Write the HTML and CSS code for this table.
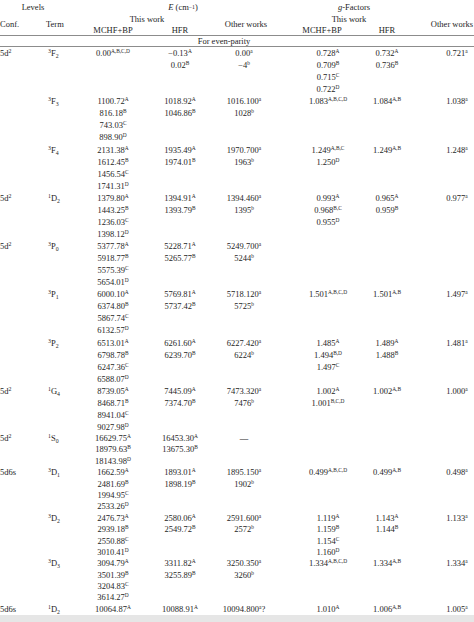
FILE: index.html
```html
<!DOCTYPE html>
<html>
<head>
<meta charset="utf-8">
<link rel="stylesheet" href="styles.css">
</head>
<body>
<div class="table">
  <div class="head">
    <div class="hc levels">Levels</div>
    <div class="hc energy"><i>E</i>&nbsp;(cm<sup>−1</sup>)</div>
    <div class="hc gfac"><i>g</i>-Factors</div>
    <div class="hc conf-h">Conf.</div>
    <div class="hc term-h">Term</div>
    <div class="hc tw-e">This work</div>
    <div class="hc ow-e">Other works</div>
    <div class="hc tw-g">This work</div>
    <div class="hc ow-g">Other works</div>
    <div class="hc m-e">MCHF+BP</div>
    <div class="hc h-e">HFR</div>
    <div class="hc m-g">MCHF+BP</div>
    <div class="hc h-g">HFR</div>
  </div>
  <div class="rule"></div>
  <div class="section">For even-parity</div>
  <div class="rule"></div>

  <div class="group">
    <div class="conf"><div class="ln">5d<sup>2</sup></div></div>
    <div class="term"><div class="ln"><sup>3</sup>F<sub>2</sub></div></div>
    <div class="col"><div class="ln">0.00<sup>A,B,C,D</sup></div></div>
    <div class="col"><div class="ln">−0.13<sup>A</sup></div><div class="ln">0.02<sup>B</sup></div></div>
    <div class="col"><div class="ln">0.00<sup>a</sup></div><div class="ln">−4<sup>b</sup></div></div>
    <div class="col gm"><div class="ln">0.728<sup>A</sup></div><div class="ln">0.709<sup>B</sup></div><div class="ln">0.715<sup>C</sup></div><div class="ln">0.722<sup>D</sup></div></div>
    <div class="col"><div class="ln">0.732<sup>A</sup></div><div class="ln">0.736<sup>B</sup></div></div>
    <div class="col go"><div class="ln">0.721<sup>a</sup></div></div>
  </div>

  <div class="group">
    <div class="conf"></div>
    <div class="term"><div class="ln"><sup>3</sup>F<sub>3</sub></div></div>
    <div class="col"><div class="ln">1100.72<sup>A</sup></div><div class="ln">816.18<sup>B</sup></div><div class="ln">743.03<sup>C</sup></div><div class="ln">898.90<sup>D</sup></div></div>
    <div class="col"><div class="ln">1018.92<sup>A</sup></div><div class="ln">1046.86<sup>B</sup></div></div>
    <div class="col"><div class="ln">1016.100<sup>a</sup></div><div class="ln">1028<sup>b</sup></div></div>
    <div class="col gm"><div class="ln">1.083<sup>A,B,C,D</sup></div></div>
    <div class="col"><div class="ln">1.084<sup>A,B</sup></div></div>
    <div class="col go"><div class="ln">1.038<sup>a</sup></div></div>
  </div>

  <div class="group">
    <div class="conf"></div>
    <div class="term"><div class="ln"><sup>3</sup>F<sub>4</sub></div></div>
    <div class="col"><div class="ln">2131.38<sup>A</sup></div><div class="ln">1612.45<sup>B</sup></div><div class="ln">1456.54<sup>C</sup></div><div class="ln">1741.31<sup>D</sup></div></div>
    <div class="col"><div class="ln">1935.49<sup>A</sup></div><div class="ln">1974.01<sup>B</sup></div></div>
    <div class="col"><div class="ln">1970.700<sup>a</sup></div><div class="ln">1963<sup>b</sup></div></div>
    <div class="col gm"><div class="ln">1.249<sup>A,B,C</sup></div><div class="ln">1.250<sup>D</sup></div></div>
    <div class="col"><div class="ln">1.249<sup>A,B</sup></div></div>
    <div class="col go"><div class="ln">1.248<sup>a</sup></div></div>
  </div>

  <div class="group">
    <div class="conf"><div class="ln">5d<sup>2</sup></div></div>
    <div class="term"><div class="ln"><sup>1</sup>D<sub>2</sub></div></div>
    <div class="col"><div class="ln">1379.80<sup>A</sup></div><div class="ln">1443.25<sup>B</sup></div><div class="ln">1236.03<sup>C</sup></div><div class="ln">1398.12<sup>D</sup></div></div>
    <div class="col"><div class="ln">1394.91<sup>A</sup></div><div class="ln">1393.79<sup>B</sup></div></div>
    <div class="col"><div class="ln">1394.460<sup>a</sup></div><div class="ln">1395<sup>b</sup></div></div>
    <div class="col gm"><div class="ln">0.993<sup>A</sup></div><div class="ln">0.968<sup>B,C</sup></div><div class="ln">0.955<sup>D</sup></div></div>
    <div class="col"><div class="ln">0.965<sup>A</sup></div><div class="ln">0.959<sup>B</sup></div></div>
    <div class="col go"><div class="ln">0.977<sup>a</sup></div></div>
  </div>

  <div class="group">
    <div class="conf"><div class="ln">5d<sup>2</sup></div></div>
    <div class="term"><div class="ln"><sup>3</sup>P<sub>0</sub></div></div>
    <div class="col"><div class="ln">5377.78<sup>A</sup></div><div class="ln">5918.77<sup>B</sup></div><div class="ln">5575.39<sup>C</sup></div><div class="ln">5654.01<sup>D</sup></div></div>
    <div class="col"><div class="ln">5228.71<sup>A</sup></div><div class="ln">5265.77<sup>B</sup></div></div>
    <div class="col"><div class="ln">5249.700<sup>a</sup></div><div class="ln">5244<sup>b</sup></div></div>
    <div class="col gm"></div>
    <div class="col"></div>
    <div class="col go"></div>
  </div>

  <div class="group">
    <div class="conf"></div>
    <div class="term"><div class="ln"><sup>3</sup>P<sub>1</sub></div></div>
    <div class="col"><div class="ln">6000.10<sup>A</sup></div><div class="ln">6374.80<sup>B</sup></div><div class="ln">5867.74<sup>C</sup></div><div class="ln">6132.57<sup>D</sup></div></div>
    <div class="col"><div class="ln">5769.81<sup>A</sup></div><div class="ln">5737.42<sup>B</sup></div></div>
    <div class="col"><div class="ln">5718.120<sup>a</sup></div><div class="ln">5725<sup>b</sup></div></div>
    <div class="col gm"><div class="ln">1.501<sup>A,B,C,D</sup></div></div>
    <div class="col"><div class="ln">1.501<sup>A,B</sup></div></div>
    <div class="col go"><div class="ln">1.497<sup>a</sup></div></div>
  </div>

  <div class="group">
    <div class="conf"></div>
    <div class="term"><div class="ln"><sup>3</sup>P<sub>2</sub></div></div>
    <div class="col"><div class="ln">6513.01<sup>A</sup></div><div class="ln">6798.78<sup>B</sup></div><div class="ln">6247.36<sup>C</sup></div><div class="ln">6588.07<sup>D</sup></div></div>
    <div class="col"><div class="ln">6261.60<sup>A</sup></div><div class="ln">6239.70<sup>B</sup></div></div>
    <div class="col"><div class="ln">6227.420<sup>a</sup></div><div class="ln">6224<sup>b</sup></div></div>
    <div class="col gm"><div class="ln">1.485<sup>A</sup></div><div class="ln">1.494<sup>B,D</sup></div><div class="ln">1.497<sup>C</sup></div></div>
    <div class="col"><div class="ln">1.489<sup>A</sup></div><div class="ln">1.488<sup>B</sup></div></div>
    <div class="col go"><div class="ln">1.481<sup>a</sup></div></div>
  </div>

  <div class="group">
    <div class="conf"><div class="ln">5d<sup>2</sup></div></div>
    <div class="term"><div class="ln"><sup>1</sup>G<sub>4</sub></div></div>
    <div class="col"><div class="ln">8739.05<sup>A</sup></div><div class="ln">8468.71<sup>B</sup></div><div class="ln">8941.04<sup>C</sup></div><div class="ln">9027.98<sup>D</sup></div></div>
    <div class="col"><div class="ln">7445.09<sup>A</sup></div><div class="ln">7374.70<sup>B</sup></div></div>
    <div class="col"><div class="ln">7473.320<sup>a</sup></div><div class="ln">7476<sup>b</sup></div></div>
    <div class="col gm"><div class="ln">1.002<sup>A</sup></div><div class="ln">1.001<sup>B,C,D</sup></div></div>
    <div class="col"><div class="ln">1.002<sup>A,B</sup></div></div>
    <div class="col go"><div class="ln">1.000<sup>a</sup></div></div>
  </div>

  <div class="group tight">
    <div class="conf"><div class="ln">5d<sup>2</sup></div></div>
    <div class="term"><div class="ln"><sup>1</sup>S<sub>0</sub></div></div>
    <div class="col"><div class="ln">16629.75<sup>A</sup></div><div class="ln">18979.63<sup>B</sup></div><div class="ln">18143.98<sup>D</sup></div></div>
    <div class="col"><div class="ln">16453.30<sup>A</sup></div><div class="ln">13675.30<sup>B</sup></div></div>
    <div class="col"><div class="ln">—</div></div>
    <div class="col gm"></div>
    <div class="col"></div>
    <div class="col go"></div>
  </div>

  <div class="group tight">
    <div class="conf"><div class="ln">5d6s</div></div>
    <div class="term"><div class="ln"><sup>3</sup>D<sub>1</sub></div></div>
    <div class="col"><div class="ln">1662.59<sup>A</sup></div><div class="ln">2481.69<sup>B</sup></div><div class="ln">1994.95<sup>C</sup></div><div class="ln">2533.26<sup>D</sup></div></div>
    <div class="col"><div class="ln">1893.01<sup>A</sup></div><div class="ln">1898.19<sup>B</sup></div></div>
    <div class="col"><div class="ln">1895.150<sup>a</sup></div><div class="ln">1902<sup>b</sup></div></div>
    <div class="col gm"><div class="ln">0.499<sup>A,B,C,D</sup></div></div>
    <div class="col"><div class="ln">0.499<sup>A,B</sup></div></div>
    <div class="col go"><div class="ln">0.498<sup>a</sup></div></div>
  </div>

  <div class="group tight">
    <div class="conf"></div>
    <div class="term"><div class="ln"><sup>3</sup>D<sub>2</sub></div></div>
    <div class="col"><div class="ln">2476.73<sup>A</sup></div><div class="ln">2939.18<sup>B</sup></div><div class="ln">2550.88<sup>C</sup></div><div class="ln">3010.41<sup>D</sup></div></div>
    <div class="col"><div class="ln">2580.06<sup>A</sup></div><div class="ln">2549.72<sup>B</sup></div></div>
    <div class="col"><div class="ln">2591.600<sup>a</sup></div><div class="ln">2572<sup>b</sup></div></div>
    <div class="col gm"><div class="ln">1.119<sup>A</sup></div><div class="ln">1.159<sup>B</sup></div><div class="ln">1.154<sup>C</sup></div><div class="ln">1.160<sup>D</sup></div></div>
    <div class="col"><div class="ln">1.143<sup>A</sup></div><div class="ln">1.144<sup>B</sup></div></div>
    <div class="col go"><div class="ln">1.133<sup>a</sup></div></div>
  </div>

  <div class="group tight">
    <div class="conf"></div>
    <div class="term"><div class="ln"><sup>3</sup>D<sub>3</sub></div></div>
    <div class="col"><div class="ln">3094.79<sup>A</sup></div><div class="ln">3501.39<sup>B</sup></div><div class="ln">3204.83<sup>C</sup></div><div class="ln">3614.27<sup>D</sup></div></div>
    <div class="col"><div class="ln">3311.82<sup>A</sup></div><div class="ln">3255.89<sup>B</sup></div></div>
    <div class="col"><div class="ln">3250.350<sup>a</sup></div><div class="ln">3260<sup>b</sup></div></div>
    <div class="col gm"><div class="ln">1.334<sup>A,B,C,D</sup></div></div>
    <div class="col"><div class="ln">1.334<sup>A,B</sup></div></div>
    <div class="col go"><div class="ln">1.334<sup>a</sup></div></div>
  </div>

  <div class="group tight">
    <div class="conf"><div class="ln">5d6s</div></div>
    <div class="term"><div class="ln"><sup>1</sup>D<sub>2</sub></div></div>
    <div class="col"><div class="ln">10064.87<sup>A</sup></div></div>
    <div class="col"><div class="ln">10088.91<sup>A</sup></div></div>
    <div class="col"><div class="ln">10094.800<sup>a</sup>?</div></div>
    <div class="col gm"><div class="ln">1.010<sup>A</sup></div></div>
    <div class="col"><div class="ln">1.006<sup>A,B</sup></div></div>
    <div class="col go"><div class="ln">1.005<sup>a</sup></div></div>
  </div>

  <div class="foot"></div>
</div>
</body>
</html>
```

FILE: styles.css
```css
* {
  box-sizing: border-box;
  margin: 0;
  padding: 0;
}

body {
  margin: 0;
  background: #ffffff;
  color: #1e1e1e;
  font-family: "Liberation Serif", "Times New Roman", serif;
  font-size: 8.5px;
  width: 474px;
  height: 622px;
  overflow: hidden;
}

.table {
  width: 474px;
}

.head {
  display: grid;
  grid-template-columns: 44px 36px 66px 68px 60px 86px 54px 60px;
  grid-template-rows: 13px 11px 11px;
}

.hc {
  display: flex;
  align-items: center;
  justify-content: center;
  white-space: nowrap;
}

.levels { grid-column: 1 / 3; grid-row: 1; padding-right: 14px; }
.energy { grid-column: 3 / 6; grid-row: 1; padding-left: 12px; }
.gfac { grid-column: 6 / 9; grid-row: 1; padding-right: 40px; }
.conf-h { grid-column: 1; grid-row: 2 / 4; justify-content: flex-start; }
.term-h { grid-column: 2; grid-row: 2 / 4; justify-content: flex-start; padding-left: 2px; }
.tw-e { grid-column: 3 / 5; grid-row: 2; }
.ow-e { grid-column: 5; grid-row: 2 / 4; padding-left: 4px; }
.tw-g { grid-column: 6 / 8; grid-row: 2; padding-left: 10px; }
.ow-g { grid-column: 8; grid-row: 2 / 4; padding-left: 16px; }
.m-e { grid-column: 3; grid-row: 3; }
.h-e { grid-column: 4; grid-row: 3; }
.m-g { grid-column: 6; grid-row: 3; padding-left: 22px; padding-right: 12px; }
.h-g { grid-column: 7; grid-row: 3; }

.hc sup {
  font-size: 5.8px;
  vertical-align: 3px;
}

.rule {
  height: 1px;
  background: #8c8c8c;
}

.section {
  height: 10px;
  display: flex;
  align-items: center;
  justify-content: center;
  padding-right: 26px;
  white-space: nowrap;
}

.group {
  display: grid;
  grid-template-columns: 44px 36px 66px 68px 60px 86px 54px 60px;
}

.conf,
.term {
  display: flex;
  flex-direction: column;
}

.term {
  padding-left: 4px;
}

.col {
  display: flex;
  flex-direction: column;
  align-items: center;
}

.gm {
  padding-left: 22px;
}

.go {
  padding-left: 26px;
}

.ln {
  height: 12.07px;
  line-height: 12.07px;
  white-space: nowrap;
}

.tight .ln {
  height: 11.4px;
  line-height: 11.4px;
}

sup {
  font-size: 5.4px;
  line-height: 0;
  vertical-align: 3px;
}

sub {
  font-size: 5.8px;
  line-height: 0;
  vertical-align: -1.5px;
}

.term sup,
.conf sup {
  font-size: 5.8px;
}

.foot {
  height: 10px;
  background: #e6e6e6;
}
```
